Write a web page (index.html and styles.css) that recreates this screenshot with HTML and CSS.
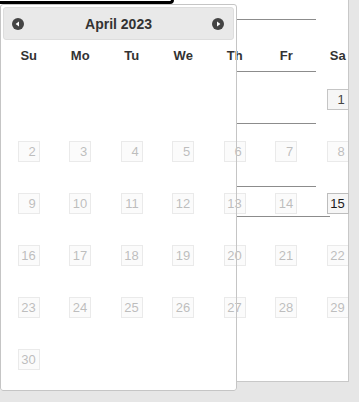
FILE: index.html
```html
<!DOCTYPE html>
<html>
<head>
<meta charset="utf-8">
<link rel="stylesheet" href="styles.css">
</head>
<body>
<div class="page">
  <div class="field"></div>
  <div class="rule r1"></div>
  <div class="rule r2"></div>
  <div class="rule r3"></div>
  <div class="rule r4"></div>
  <div class="rule r5"></div>
</div>
<div class="datepicker">
  <div class="dp-header">
    <a class="dp-nav prev" title="Prev">
      <svg width="12" height="12" viewBox="0 0 12 12"><circle cx="6" cy="6" r="6" fill="#444"/><polygon points="3.6,6 7,3.4 7,8.6" fill="#fff"/></svg>
    </a>
    <div class="dp-title">April 2023</div>
    <a class="dp-nav next" title="Next">
      <svg width="12" height="12" viewBox="0 0 12 12"><circle cx="6" cy="6" r="6" fill="#444"/><polygon points="8.4,6 5,3.4 5,8.6" fill="#fff"/></svg>
    </a>
  </div>
  <div class="dp-grid">
    <div class="dow">Su</div><div class="dow">Mo</div><div class="dow">Tu</div><div class="dow">We</div><div class="dow">Th</div><div class="dow">Fr</div><div class="dow">Sa</div>

    <div class="day"></div><div class="day"></div><div class="day"></div><div class="day"></div><div class="day"></div><div class="day"></div><div class="day"><span class="cell">1</span></div>

    <div class="day"><span class="cell off">2</span></div><div class="day"><span class="cell off">3</span></div><div class="day"><span class="cell off">4</span></div><div class="day"><span class="cell off">5</span></div><div class="day"><span class="cell off">6</span></div><div class="day"><span class="cell off">7</span></div><div class="day"><span class="cell off">8</span></div>

    <div class="day"><span class="cell off">9</span></div><div class="day"><span class="cell off">10</span></div><div class="day"><span class="cell off">11</span></div><div class="day"><span class="cell off">12</span></div><div class="day"><span class="cell off">13</span></div><div class="day"><span class="cell off">14</span></div><div class="day"><span class="cell hover">15</span></div>

    <div class="day"><span class="cell off">16</span></div><div class="day"><span class="cell off">17</span></div><div class="day"><span class="cell off">18</span></div><div class="day"><span class="cell off">19</span></div><div class="day"><span class="cell off">20</span></div><div class="day"><span class="cell off">21</span></div><div class="day"><span class="cell off">22</span></div>

    <div class="day"><span class="cell off">23</span></div><div class="day"><span class="cell off">24</span></div><div class="day"><span class="cell off">25</span></div><div class="day"><span class="cell off">26</span></div><div class="day"><span class="cell off">27</span></div><div class="day"><span class="cell off">28</span></div><div class="day"><span class="cell off">29</span></div>

    <div class="day"><span class="cell off">30</span></div><div class="day"></div><div class="day"></div><div class="day"></div><div class="day"></div><div class="day"></div><div class="day"></div>
  </div>
</div>
</body>
</html>
```

FILE: styles.css
```css
html, body {
  margin: 0;
  padding: 0;
}
body {
  background: #e6e6e6;
  font-family: "Liberation Sans", Arial, sans-serif;
  width: 359px;
  height: 402px;
  overflow: hidden;
  position: relative;
}

/* background page */
.page {
  width: 349px;
  height: 382px;
  box-sizing: border-box;
  background: #fff;
  border-right: 1px solid #c8c8c8;
  border-bottom: 1px solid #c8c8c8;
  display: flex;
  flex-direction: column;
  align-items: flex-start;
}
.field {
  margin-top: -16px;
  margin-left: -10px;
  width: 184px;
  height: 20px;
  box-sizing: border-box;
  border: 3px solid #000;
  border-radius: 4px;
  flex: none;
}
.rule {
  flex: none;
  height: 1px;
  background: #8c8c8c;
  margin-left: 150px;
  width: 166px;
}
.r1 { margin-top: 15px; }
.r2 { margin-top: 51px; }
.r3 { margin-top: 51px; }
.r4 { margin-top: 62px; }
.r5 { margin-top: 29px; width: 180px; }

/* datepicker popup */
.datepicker {
  position: absolute;
  left: 0;
  top: 4px;
  width: 237px;
  height: 387px;
  box-sizing: border-box;
  padding: 3px;
  background: #fff;
  border-radius: 3px;
}
.datepicker::after {
  content: "";
  position: absolute;
  inset: 0;
  border: 1px solid #c5c5c5;
  border-radius: 3px;
  pointer-events: none;
}
.dp-header {
  height: 33px;
  box-sizing: border-box;
  border: 1px solid #dddddd;
  background: #e9e9e9;
  border-radius: 3px;
  display: grid;
  grid-template-columns: 1fr auto 1fr;
  align-items: center;
  color: #333;
}
.dp-nav {
  display: block;
  width: 12px;
  height: 12px;
}
.dp-nav svg { display: block; }
.prev { justify-self: start; margin-left: 8px; }
.next { justify-self: end; margin-right: 9px; }
.dp-title {
  font-weight: bold;
  font-size: 14px;
  line-height: 16px;
}
.dp-grid {
  display: grid;
  grid-template-columns: repeat(7, 51.5px);
  grid-template-rows: 31px repeat(6, 52px);
  width: 360.5px;
}
.dow {
  display: flex;
  align-items: center;
  justify-content: center;
  font-weight: bold;
  font-size: 13px;
  color: #333;
}
.day {
  display: flex;
  justify-content: center;
  align-items: flex-start;
}
.cell {
  margin-top: 18px;
  width: 22px;
  height: 21px;
  box-sizing: border-box;
  border: 1px solid #c5c5c5;
  background: #f6f6f6;
  color: #454545;
  font-size: 13px;
  line-height: 19px;
  text-align: right;
  padding-right: 3px;
}
.cell.off { opacity: .35; }
.cell.hover { color: #1a1a1a; border-color: #bdbdbd; }
```
